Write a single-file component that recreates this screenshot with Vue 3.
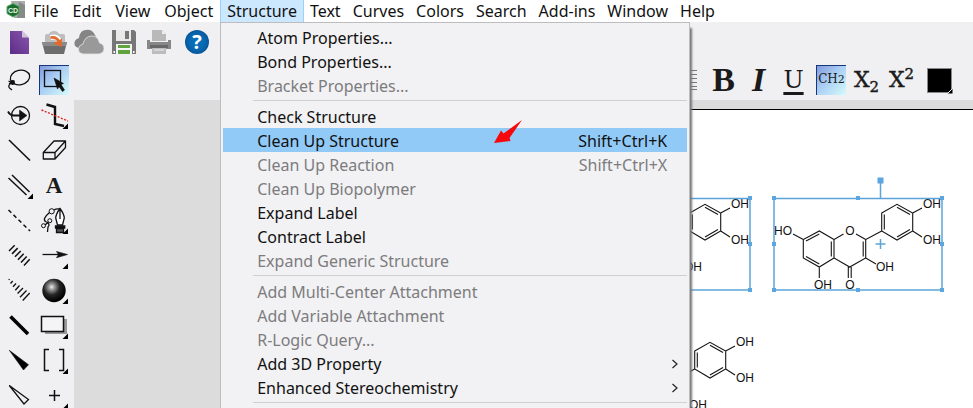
<script setup>
const menusBefore = ['File', 'Edit', 'View', 'Object']
const menusAfter = ['Text', 'Curves', 'Colors', 'Search', 'Add-ins', 'Window', 'Help']

const structureMenu = [
  [
    { label: 'Atom Properties...' },
    { label: 'Bond Properties...' },
    { label: 'Bracket Properties...', disabled: true },
  ],
  [
    { label: 'Check Structure' },
    { label: 'Clean Up Structure', keys: 'Shift+Ctrl+K', active: true },
    { label: 'Clean Up Reaction', keys: 'Shift+Ctrl+X', disabled: true },
    { label: 'Clean Up Biopolymer', disabled: true },
    { label: 'Expand Label' },
    { label: 'Contract Label' },
    { label: 'Expand Generic Structure', disabled: true },
  ],
  [
    { label: 'Add Multi-Center Attachment', disabled: true },
    { label: 'Add Variable Attachment', disabled: true },
    { label: 'R-Logic Query...', disabled: true },
    { label: 'Add 3D Property', submenu: true },
    { label: 'Enhanced Stereochemistry', submenu: true },
  ],
  [],
]

const tools = [
  { id: 'lasso', name: 'Lasso' },
  { id: 'marquee', name: 'Marquee', selected: true },
  { id: 'rotate', name: 'Structure perspective' },
  { id: 'fragment', name: 'Mass fragmentation', more: true },
  { id: 'bond', name: 'Solid bond' },
  { id: 'eraser', name: 'Eraser' },
  { id: 'double', name: 'Multiple bonds', more: true },
  { id: 'text', name: 'Text' },
  { id: 'dashed', name: 'Dashed bond' },
  { id: 'pen', name: 'Pen', more: true },
  { id: 'hashed', name: 'Hashed bond' },
  { id: 'arrow', name: 'Arrow', more: true },
  { id: 'hashwedge', name: 'Hashed wedged bond' },
  { id: 'orbital', name: 'Orbital', more: true },
  { id: 'boldbond', name: 'Bold bond' },
  { id: 'shape', name: 'Drawing elements', more: true },
  { id: 'wedge', name: 'Wedged bond' },
  { id: 'bracket', name: 'Brackets', more: true },
  { id: 'hollow', name: 'Hollow wedged bond' },
  { id: 'charge', name: 'Chemical symbols', more: true },
]

const labels = [
  ['OH', 932, 208], ['OH', 932, 244], ['OH', 885, 271],
  ['HO', 783, 235], ['OH', 823, 289], ['O', 850, 235], ['O', 850, 289],
]

const copies = [
  { x: 0, y: 0, selected: true, labels },
  { x: -192, y: 0, selected: true, labels: labels.slice(0, 3) },
  { x: -187, y: 138, selected: false, labels: labels.slice(0, 3) },
]

const handles = [
  [774, 198], [858, 198], [942, 198],
  [774, 244], [942, 244],
  [774, 290], [858, 290], [942, 290],
]
</script>

<template>
  <div class="app">
    <nav class="menubar">
      <svg class="logo" viewBox="0 0 20 18" aria-hidden="true">
        <path d="M5 0H19V17H8Z" fill="#a9aeab" />
        <path d="M13 1L19 4V17H11Z" fill="#858b88" />
        <path d="M7 2.500L13 5.500V12.500L7 16L1 12.500V5.500Z" fill="#1c6b2c" stroke="#58a765" />
        <text x="7" y="12" class="logo-text">CD</text>
      </svg>
      <button v-for="m in menusBefore" :key="m" type="button" class="menu-title">{{ m }}</button>
      <div class="menu-open">
        <button type="button" class="menu-title open" aria-expanded="true">Structure</button>
        <div class="dropdown" role="menu">
          <div v-for="(group, g) in structureMenu" :key="g" class="group">
            <button
              v-for="item in group"
              :key="item.label"
              type="button"
              role="menuitem"
              class="item"
              :class="{ active: item.active }"
              :disabled="item.disabled"
            >
              <span class="label">{{ item.label }}</span>
              <span class="keys">{{ item.keys }}</span>
              <svg v-if="item.submenu" class="chevron" viewBox="0 0 8 10" aria-hidden="true">
                <path d="M1.500 1L6 5L1.500 9" fill="none" stroke="#222" stroke-width="1.200" />
              </svg>
              <svg v-if="item.active" class="pointer" viewBox="0 0 30 26" aria-hidden="true">
                <path d="M1 24L8 11.500L10.500 14.500L29 1L16.500 19L17.500 22Z" fill="#f5090c" />
              </svg>
            </button>
          </div>
        </div>
      </div>
      <button v-for="m in menusAfter" :key="m" type="button" class="menu-title tight">{{ m }}</button>
    </nav>

    <div class="toolbar">
      <div class="tool-group">
        <button type="button" class="tool" aria-label="New">
          <svg viewBox="0 0 35 35">
            <defs><linearGradient id="newFill" x1="0" y1="1" x2="1" y2="0"><stop offset="0" stop-color="#5c2c86" /><stop offset="1" stop-color="#8a58ad" /></linearGradient></defs>
            <path d="M8 6H20L27 13V29H8Z" fill="url(#newFill)" />
            <path d="M20 5L27 12.500H20Z" fill="#d3c3df" />
          </svg>
        </button>
        <button type="button" class="tool" aria-label="Open">
          <svg viewBox="0 0 35 35">
            <path d="M8 17V11Q8 9 10 9H12Q13 6 17 6Q21 6 22 9H26Q28 9 28 11V17Z" fill="#bdbdbd" />
            <path d="M5 17H30L27 29H8Z" fill="#6d6d6d" />
            <path d="M5 17H30L29 21H6Z" fill="#8a8a8a" />
            <path d="M13.500 12.500Q20 10.500 22.500 16" fill="none" stroke="#fff" stroke-width="5" />
            <path d="M13.500 12.500Q20 11.500 22 17" fill="none" stroke="#e4692c" stroke-width="2.600" />
            <path d="M16.500 18.500L24.500 22L25 13.500Z" fill="#e4692c" />
          </svg>
        </button>
        <button type="button" class="tool" aria-label="Cloud">
          <svg viewBox="0 0 35 35">
            <path d="M7 23Q2 22 2.500 17.500Q3 14 7 13Q8 5 14 5Q20 4 23 10L26 16L20 23Z" fill="#858585" />
            <path d="M11 29Q6 28 6.500 23.500Q7 20 11 19Q13 11 20 11Q26 11 27.500 18Q32 19 32 23.500Q32 28 27 29Z" fill="#999" stroke="#e6e6e6" stroke-width=".8" />
          </svg>
        </button>
        <button type="button" class="tool" aria-label="Save">
          <svg viewBox="0 0 35 35">
            <path d="M5 5H27L29 7V29H5Z" fill="#777" />
            <path d="M9 5H24V16H9Z" fill="#e9e9e9" />
            <path d="M18 6H22V14H18Z" fill="#777" />
            <path d="M9 19H25V29H9Z" fill="#f5f5f5" />
            <path d="M11 20H23V23H11ZM11 25H23V29H11Z" fill="#5fa43c" />
            <path d="M6.500 26H8V28H6.500ZM26 26H27.500V28H26Z" fill="#fff" />
          </svg>
        </button>
        <button type="button" class="tool" aria-label="Print">
          <svg viewBox="0 0 35 35">
            <path d="M10 5H20L24 9V16H10Z" fill="#b9b9b9" />
            <path d="M20 5L24 9H20Z" fill="#eee" />
            <path d="M5 15H8V17H26V15H29V24H5Z" fill="#878787" />
            <path d="M8 20H26V23H8Z" fill="#686868" />
            <path d="M10 23H24V29H10Z" fill="#bcbcbc" />
            <path d="M12 25H22" stroke="#eee" />
          </svg>
        </button>
      </div>
      <div class="tool-group">
        <button type="button" class="tool" aria-label="Help">
          <svg viewBox="0 0 35 35">
            <defs><radialGradient id="helpFill"><stop offset=".5" stop-color="#086db8" /><stop offset="1" stop-color="#07579b" /></radialGradient></defs>
            <circle cx="17" cy="17" r="12" fill="url(#helpFill)" />
            <text x="17" y="24" class="help-mark">?</text>
          </svg>
        </button>
      </div>
    </div>

    <div class="workspace">
      <aside class="palette">
        <button
          v-for="t in tools"
          :key="t.id"
          type="button"
          class="tool"
          :class="{ selected: t.selected }"
          :aria-label="t.name"
        >
          <svg viewBox="0 0 35 35" fill="none" stroke="#111" stroke-width="1.300">
            <g v-if="t.id === 'lasso'">
              <ellipse cx="18" cy="15.500" rx="9.800" ry="7.200" transform="rotate(-12 18 15.500)" />
              <path d="M6.500 19L12.500 22M7 22Q12 18 12 19.500M9 21Q5.500 24 7.500 26L10 28" />
              <circle cx="10.500" cy="20.500" r="1.800" fill="#111" />
            </g>
            <g v-else-if="t.id === 'marquee'">
              <rect x="7.500" y="8.500" width="16" height="16" />
              <path d="M17 16L26.500 21.500L24 22.500L27.500 28L25.500 29.500L22 24.500L20.500 27Z" fill="#111" stroke-width=".6" />
            </g>
            <g v-else-if="t.id === 'rotate'">
              <circle cx="18.500" cy="18.500" r="9" />
              <path d="M6 14.500Q8 18.500 12 18.500H20" stroke-width="1.800" />
              <path d="M17.500 13V24L25 18.500Z" fill="#111" stroke-width=".5" />
            </g>
            <g v-else-if="t.id === 'fragment'">
              <path d="M9.500 7.500L18 10V27L27 29" stroke-width="2.400" />
              <path d="M4.500 13L31 24" stroke="#e02525" stroke-width="1.400" stroke-dasharray="2 1.500" />
            </g>
            <path v-else-if="t.id === 'bond'" d="M7 8L28 28.500" stroke-width="1.600" />
            <path v-else-if="t.id === 'eraser'" d="M6.300 20.500V27H18V20.500ZM6.300 20.500L17 9H28.500L18 20.500M28.500 9V15.500L18 27" stroke-linejoin="round" />
            <path v-else-if="t.id === 'double'" d="M10 8L27.500 25M6.500 11L24.500 28" stroke-width="1.500" />
            <text v-else-if="t.id === 'text'" x="17" y="26" class="letter-tool">A</text>
            <path v-else-if="t.id === 'dashed'" d="M6.500 8L28 29" stroke-width="1.500" stroke-dasharray="4 3" />
            <g v-else-if="t.id === 'pen'">
              <path d="M23 7Q19 6.500 17 8M12.500 10.500Q5 17 8.500 19.500Q14 22 11 25L10.500 30M8 23L11.500 20" />
              <circle cx="14.700" cy="9.300" r="2.600" stroke-width="1" />
              <circle cx="6.500" cy="23.700" r="2" stroke-width="1" />
              <circle cx="12.800" cy="18.700" r="2" stroke-width="1" />
              <path d="M23 6.500Q19 12 18.700 16L20.500 23H25.500L27.300 16Q27 12 23 6.500ZM23 7V17" fill="#fff" />
              <path d="M18.500 24H27.700V26H18.500Z" fill="#111" />
              <path d="M19.500 26.500H26.500V30.500H19.500Z" fill="#555" />
            </g>
            <path v-else-if="t.id === 'hashed'" d="M12.700 8.300L7 14M15.700 11.100L10 16.900M18.700 13.900L13 19.800M21.700 16.700L16 22.700M24.700 19.500L19 25.600M27.700 22.300L22 28.500" stroke-width="1.500" />
            <g v-else-if="t.id === 'arrow'">
              <path d="M5.500 17.500H22" />
              <path d="M19.500 14.500L30.500 17.500L19.500 20.700L21.500 17.500Z" fill="#111" stroke-width=".6" />
            </g>
            <path v-else-if="t.id === 'hashwedge'" d="M7.500 7L6.800 8M10.700 9L8.500 11.500M14 11.500L11 14.800M17.500 13.500L13.300 18.200M21 16L15.600 21.500M24.500 18.500L18 25.200M27.700 21L20.700 28.500" />
            <g v-else-if="t.id === 'orbital'">
              <defs><radialGradient id="orb" cx=".4" cy=".35" r=".62"><stop offset="0" stop-color="#eee" /><stop offset=".2" stop-color="#999" /><stop offset=".55" stop-color="#252525" /><stop offset="1" stop-color="#000" /></radialGradient></defs>
              <circle cx="17" cy="18.500" r="11.700" fill="url(#orb)" stroke="none" />
            </g>
            <path v-else-if="t.id === 'boldbond'" d="M8.500 9.500L26 27" stroke="#000" stroke-width="3.600" />
            <g v-else-if="t.id === 'shape'">
              <path d="M8 12H30V27H8Z" fill="#999" stroke="none" />
              <path d="M4.500 9.500H26.500V24.500H4.500Z" fill="#f4f3f5" stroke-width="1.500" />
            </g>
            <path v-else-if="t.id === 'wedge'" d="M7.300 8.300L26.500 22.700L21.500 28Z" fill="#000" stroke-width=".6" />
            <path v-else-if="t.id === 'bracket'" d="M12 7.500H7.500V28.500H12M22 7.500H26.500V28.500H22" stroke-width="1.500" />
            <path v-else-if="t.id === 'hollow'" d="M7.300 8.500L26.500 22.500L22 27Z" />
            <path v-else-if="t.id === 'charge'" d="M17.500 13V24M12 18.500H23" stroke-width="1.500" />
            <path v-if="t.more" d="M31 26.500V32H25.500Z" fill="#000" stroke="none" />
          </svg>
        </button>
      </aside>

      <main class="main">
        <div class="formatbar">
          <div class="tool-group">
            <button type="button" class="tool" aria-label="Justify">
              <svg viewBox="0 0 35 35" stroke="#777"><path d="M8 8.500H26M8 12.500H26M8 16.500H26M8 20.500H26M8 24.500H26M8 27.500H26" /></svg>
            </button>
            <button type="button" class="tool glyph bold">B</button>
            <button type="button" class="tool glyph italic">I</button>
            <button type="button" class="tool glyph underline">U</button>
          </div>
          <div class="tool-group">
            <button type="button" class="tool glyph formula selected">CH<small>2</small></button>
            <button type="button" class="tool glyph script">X<sub>2</sub></button>
            <button type="button" class="tool glyph script">X<sup>2</sup></button>
          </div>
          <div class="tool-group">
            <button type="button" class="tool" aria-label="Color">
              <svg viewBox="0 0 35 35">
                <rect x="5.500" y="6.500" width="24" height="24" fill="#000" stroke="#888" />
                <path d="M31 26V32H25Z" fill="#000" stroke="#f0eff0" />
              </svg>
            </button>
          </div>
        </div>

        <div class="desk">
          <div class="sheet">
            <svg class="drawing" viewBox="520 110 453 298" width="453" height="298" role="img" aria-label="Flavonoid structures">
              <g v-for="(c, i) in copies" :key="i" :transform="`translate(${c.x} ${c.y})`">
                <path
                  class="bonds"
                  d="M881.700 213L897 204.300L912.700 213V231L897 240L881.700 231ZM884.300 214.500V229.500M897 207.300L910 214.500M910 229.500L897 237
                     M912.700 213L922 208M912.700 231L922 237M881.700 231L865.700 239.500V258L849.700 267L834 258V239.500L843.500 234M856 234L865.700 239.500M863.200 241.500V256.500
                     M865.700 258L876 264M848.300 267V278M851.200 267V278M834 239.500L819.300 231L803.300 239.500V258L819.300 267L834 258M831.300 241.500V256.500
                     M819.300 234L806 241M806 256.500L819.300 264M803.300 239.500L793 234M819.300 267V278"
                />
                <text v-for="(l, k) in c.labels" :key="k" class="atom" :x="l[1]" :y="l[2]">{{ l[0] }}</text>
                <g v-if="c.selected" class="selection">
                  <rect class="frame" x="774" y="198.500" width="168" height="91.500" />
                  <rect v-for="(h, k) in handles" :key="k" class="handle" :x="h[0] - 2" :y="h[1] - 2" width="4" height="4" />
                </g>
                <g v-if="i === 0" class="selection">
                  <path class="frame" d="M880.500 182V198" />
                  <rect class="handle" x="877.500" y="177.500" width="6" height="6" />
                  <path class="frame" d="M880.500 239V249M875.500 244H885.500" />
                </g>
              </g>
            </svg>
          </div>
        </div>
      </main>
    </div>
  </div>
</template>

<style>
body {
  margin: 0;
  background: #f0eff0;
}
</style>

<style scoped>
.app {
  display: flex;
  flex-direction: column;
  height: 100vh;
  overflow: hidden;
  background: #f0eff1;
  color: #111;
  font-family: "Noto Sans", "Open Sans", sans-serif;
  font-size: 16px;
}

button {
  margin: 0;
  padding: 0;
  border: 0;
  background: none;
  color: inherit;
  font: inherit;
}

.menubar {
  display: flex;
  flex: none;
  height: 22px;
  background: #fff;
}

.logo {
  flex: none;
  width: 20px;
  height: 18px;
  margin: 1px 0 0 6px;
}

.logo-text {
  font: bold 7px "Liberation Sans", sans-serif;
  fill: #e6f5e5;
  text-anchor: middle;
}

.menu-title {
  height: 22px;
  padding: 0 7px;
  line-height: 20px;
  white-space: nowrap;
}

.menu-title.tight {
  padding: 0 6px;
}

.menu-title.open {
  background: #cce8ff;
  box-shadow: inset 1px 0 #99d1ff, inset -1px 0 #99d1ff;
}

.menu-open {
  position: relative;
}

.dropdown {
  position: absolute;
  z-index: 2;
  top: 22px;
  left: 0;
  width: 470px;
  min-height: calc(100vh - 20px);
  box-sizing: border-box;
  padding: 2px;
  border: 1px solid #bdbdbf;
  background: #f2f1f3;
  box-shadow: 3px 5px 2px -1px #77777a;
}

.group + .group::before {
  content: "";
  display: block;
  height: 1px;
  margin: 3px 0 3px 30px;
  background: #d0d0d2;
}

.item {
  position: relative;
  display: grid;
  grid-template-columns: 1fr auto 20px;
  align-items: center;
  width: 100%;
  height: 24px;
  padding: 2px 0 0 34px;
  text-align: left;
  white-space: nowrap;
}

.item:disabled {
  color: #7c7c7e;
}

.item.active {
  background: #91c9f7;
}

.chevron {
  width: 8px;
  height: 10px;
  margin-left: 4px;
}

.pointer {
  position: absolute;
  top: -9px;
  left: 270px;
  width: 30px;
  height: 26px;
}

.toolbar {
  display: flex;
  flex: none;
  gap: 3px;
  align-items: center;
  height: 40px;
  padding-left: 2px;
}

.tool-group {
  display: flex;
}

.tool {
  flex: none;
  width: 35px;
  height: 35px;
}

.tool svg {
  display: block;
  width: 35px;
  height: 35px;
}

.tool.selected {
  background:
    linear-gradient(#16377c, #16377c) 2px 3px / 30px 1px no-repeat,
    linear-gradient(#16377c, #16377c) 2px 3px / 1px 30px no-repeat,
    linear-gradient(135deg, #7f95da 0%, #a9cdf3 45%, #d4fbfb 100%) 2px 3px / 30px 30px no-repeat;
}

.workspace {
  display: flex;
  flex: 1;
  min-height: 0;
}

.palette {
  display: grid;
  flex: none;
  grid-template-columns: 35px 35px;
  align-content: start;
  padding: 0 2px;
}

.letter-tool {
  font: bold 23px "Liberation Serif", serif;
  fill: #1a1a1a;
  stroke: none;
  text-anchor: middle;
}

.help-mark {
  font: bold 20px "Open Sans", sans-serif;
  fill: #fff;
  text-anchor: middle;
}

.main {
  display: flex;
  flex: 1;
  flex-direction: column;
  min-width: 0;
}

.formatbar {
  display: flex;
  flex: none;
  gap: 3px;
  height: 38px;
  padding-left: 597px;
}

.glyph {
  color: #1a1a1a;
  font-family: "Liberation Serif", serif;
  line-height: 35px;
  text-align: center;
  white-space: nowrap;
}

.bold {
  font-size: 34px;
  font-weight: bold;
}

.italic {
  font-size: 34px;
  font-style: italic;
  font-weight: bold;
}

.underline {
  font-family: "DejaVu Serif", serif;
  font-size: 24px;
  line-height: 30px;
  text-decoration: underline;
  text-decoration-thickness: 3px;
  text-underline-offset: 4px;
}

.formula {
  font-family: "DejaVu Serif", serif;
  font-size: 12px;
}

.formula small {
  font-size: 11px;
}

.script {
  font-family: "DejaVu Serif", serif;
  font-size: 22px;
  -webkit-text-stroke: 0.4px #1a1a1a;
}

.script sub,
.script sup {
  font-size: 15px;
  line-height: 0;
}

.desk {
  display: flex;
  flex: 1;
  min-height: 0;
  padding: 9px 0 0 446px;
  background: #dcdcdd;
}

.sheet {
  flex: 1;
  overflow: hidden;
  border-top: 1px solid #000;
  background: #fff;
}

.drawing {
  display: block;
}

.bonds {
  fill: none;
  stroke: #151515;
  stroke-width: 1.1;
}

.atom {
  font: 12px "Liberation Sans", sans-serif;
  fill: #111;
  text-anchor: middle;
}

.frame {
  fill: none;
  stroke: #5ba4d9;
  stroke-width: 1.5;
}

.handle {
  fill: #5ba6e0;
}
</style>
